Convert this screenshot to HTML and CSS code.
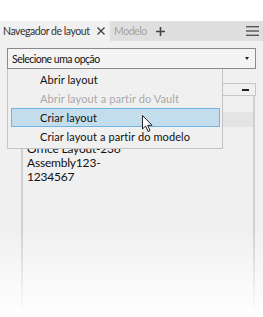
FILE: index.html
```html
<!DOCTYPE html>
<html lang="pt">
<head>
    <meta charset="UTF-8">
    <meta name="viewport" content="width=device-width, initial-scale=1.0">
    <title>Navegador de layout</title>
    <link rel="stylesheet" href="styles.css">
</head>
<body>
    <div class="panel">
        <div class="tabs">
            <div class="tab active">
                <span class="tab-label">Navegador de layout</span>
                <svg class="icon" width="8" height="8" viewBox="0 0 8 8">
                    <path d="M0.5 0.5 L7.5 7.5 M7.5 0.5 L0.5 7.5" stroke="#444" stroke-width="1.4"/>
                </svg>
            </div>
            <div class="tab">
                <span class="tab-label">Modelo</span>
                <svg class="icon" width="9" height="9" viewBox="0 0 9 9">
                    <path d="M4.5 0 V9 M0 4.5 H9" stroke="#444" stroke-width="1.6"/>
                </svg>
            </div>
            <div class="menu-btn">
                <svg width="13" height="10" viewBox="0 0 13 10">
                    <rect x="0" y="0" width="13" height="1.4" fill="#555"/>
                    <rect x="0" y="4.3" width="13" height="1.4" fill="#555"/>
                    <rect x="0" y="8.6" width="13" height="1.4" fill="#555"/>
                </svg>
            </div>
        </div>

        <div class="picker">
            <div class="selectbox">
                <span class="select-label">Selecione uma opção</span>
                <span class="arrow"></span>
            </div>
            <ul class="dropdown">
                <li>Abrir layout</li>
                <li class="disabled">Abrir layout a partir do Vault</li>
                <li class="hover">Criar layout
                    <svg class="cursor" width="12" height="18" viewBox="0 0 12 18">
                        <path d="M0.5 0.5 L0.5 14 L3.6 11 L6 16.5 L8 15.6 L5.7 10.3 L10 10.3 Z" fill="#fff" stroke="#222" stroke-width="1"/>
                    </svg>
                </li>
                <li>Criar layout a partir do modelo</li>
            </ul>
        </div>

        <div class="tree">
            <div class="tree-head"><span class="minus"></span></div>
            <div class="tree-body">
                <div class="row sel"></div>
                <div class="gap"></div>
                <div class="item">Office Layout-236</div>
                <div class="item">Assembly123-</div>
                <div class="item">1234567</div>
            </div>
        </div>
    </div>
    <div class="fade"></div>
</body>
</html>
```
FILE: styles.css
```css
html, body {
    margin: 0;
    height: 100%;
    background: #fff;
    font-family: "Lato", "Open Sans", sans-serif;
    font-size: 11px;
    color: #1e1e1e;
    overflow: hidden;
}

.panel {
    margin-top: 21px;
    height: 296px;
    background: #f0f0f0;
    display: flex;
    flex-direction: column;
}

.tabs {
    height: 20px;
    background: #dfdfdf;
    display: flex;
    align-items: center;
    flex-shrink: 0;
}

.tab {
    height: 20px;
    display: flex;
    align-items: center;
    gap: 9px;
    color: #a3a3a3;
    padding: 0 4px;
    white-space: nowrap;
}

.tab .icon {
    flex-shrink: 0;
}

.tab-label {
    font-size: 10.5px;
    letter-spacing: -0.45px;
}

.tab.active {
    width: 103px;
    background: #f0f0f0;
    color: #333;
    padding-left: 3px;
    gap: 7px;
}

.menu-btn {
    margin-left: auto;
    margin-right: 4px;
    display: flex;
}

.picker {
    position: relative;
    margin: 7px 7px 0;
}

.selectbox {
    height: 19px;
    border: 1px solid #8a8a8a;
    background: #f4f4f4;
    display: flex;
    align-items: center;
    justify-content: space-between;
    padding: 0 6px 0 4px;
    color: #111;
}

.select-label {
    font-size: 10.5px;
    letter-spacing: -0.5px;
}

.arrow {
    width: 0;
    height: 0;
    border-left: 2.5px solid transparent;
    border-right: 2.5px solid transparent;
    border-top: 3px solid #222;
}

.dropdown {
    position: absolute;
    top: 21px;
    left: 0;
    width: 214px;
    margin: 0;
    padding: 1px 0 2px;
    list-style: none;
    background: #f0f0f0;
    border: 1px solid #c4c4c4;
    border-top: none;
    z-index: 2;
}

.dropdown li {
    position: relative;
    height: 17px;
    line-height: 17px;
    padding-left: 28px;
    margin: 0 2px 0 3px;
    border: 1px solid transparent;
    color: #111;
    letter-spacing: 0.1px;
}

.dropdown li.disabled {
    color: #a9a9a9;
}

.dropdown li.hover {
    background: #c3ddec;
    border-color: #72b5e2;
}

.cursor {
    position: absolute;
    left: 130px;
    top: 6px;
}

.tree {
    margin: 14px 7px 0 21px;
    flex: 1;
    display: flex;
    flex-direction: column;
}

.tree-head {
    height: 11px;
    border: 1px solid #c6c6c6;
    background: #f0f0f0;
    display: flex;
    align-items: center;
    justify-content: flex-end;
    padding-right: 6px;
}

.minus {
    width: 7px;
    height: 2px;
    background: #222;
}

.tree-body {
    flex: 1;
    border-left: 2px solid #cfcfcf;
    border-right: 2px solid #cfcfcf;
    margin-right: 1px;
    padding-top: 16px;
}

.row.sel {
    height: 15px;
    background: #e4e4e4;
}

.gap {
    height: 15px;
}

.item {
    height: 14px;
    line-height: 14px;
    padding-left: 4px;
    font-size: 12px;
    letter-spacing: -0.2px;
    color: #111;
}

.fade {
    position: absolute;
    left: 0;
    right: 0;
    bottom: 0;
    height: 90px;
    background: linear-gradient(rgba(255,255,255,0), #fff);
    pointer-events: none;
}
```
